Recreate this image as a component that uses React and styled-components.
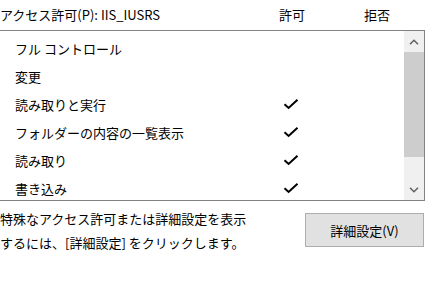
import React from "react";
import styled, { createGlobalStyle } from "styled-components";

const Global = createGlobalStyle`
  html, body { margin: 0; padding: 0; background: #ffffff; }
  body {
    font-family: "Noto Sans CJK JP", "Noto Sans", sans-serif;
    font-size: 13px;
    color: #000000;
  }
`;

const Page = styled.div`
  width: 430px;
  height: 302px;
  overflow: hidden;
  background: #ffffff;
`;

const Header = styled.div`
  display: grid;
  grid-template-columns: 1fr 56px 56px;
  column-gap: 29px;
  padding-right: 25px;
  height: 30px;
  align-items: center;
  white-space: nowrap;
`;

const HeadLabel = styled.span`
  padding-left: 0;
  margin-top: -1px;
`;

const HeadCol = styled.span`
  text-align: center;
  margin-top: -1px;
`;

const ListBox = styled.div`
  display: flex;
  width: 424px;
  height: 169px;
  border: 1px solid #828282;
  border-left: none;
  box-sizing: content-box;
`;

const Rows = styled.div`
  flex: 1;
  padding-top: 3px;
  overflow: hidden;
`;

const Row = styled.div`
  display: grid;
  grid-template-columns: 1fr 56px 56px;
  column-gap: 29px;
  height: 28px;
  align-items: center;
  white-space: nowrap;
`;

const Name = styled.span`
  padding-left: 15px;
`;

const Cell = styled.span`
  display: flex;
  justify-content: center;
  align-items: center;
`;

const Scrollbar = styled.div`
  width: 20px;
  display: flex;
  flex-direction: column;
  background: #f0f0f0;
`;

const Arrow = styled.div`
  height: 21px;
  display: flex;
  align-items: center;
  justify-content: center;
  background: #f0f0f0;
`;

const Track = styled.div`
  flex: 1;
  display: flex;
  flex-direction: column;
`;

const Thumb = styled.div`
  height: 105px;
  background: #cdcdcd;
`;

const Bottom = styled.div`
  display: flex;
  justify-content: space-between;
  align-items: flex-start;
  padding-top: 6px;
  width: 424px;
`;

const Note = styled.p`
  margin: 0;
  line-height: 24px;
  white-space: nowrap;
`;

const Button = styled.button`
  margin-top: 6px;
  width: 119px;
  height: 34px;
  background: #e1e1e1;
  border: 1px solid #adadad;
  font-family: inherit;
  font-size: 13px;
  color: #000;
  padding: 0;
`;

const Check = () => (
  <svg width="16" height="12" viewBox="0 0 16 12">
    <path d="M1.5 6.2 L5.6 10 L14.5 1.8" fill="none" stroke="#000" strokeWidth="2" />
  </svg>
);

const Chevron = ({ up }) => (
  <svg width="10" height="6" viewBox="0 0 10 6">
    <path
      d={up ? "M1 5.2 L5 1.2 L9 5.2" : "M1 0.8 L5 4.8 L9 0.8"}
      fill="none"
      stroke="#606060"
      strokeWidth="1.5"
    />
  </svg>
);

const items = [
  { name: "フル コントロール", allow: false },
  { name: "変更", allow: false },
  { name: "読み取りと実行", allow: true },
  { name: "フォルダーの内容の一覧表示", allow: true },
  { name: "読み取り", allow: true },
  { name: "書き込み", allow: true },
];

export default function App() {
  return (
    <Page>
      <Global />
      <Header>
        <HeadLabel>アクセス許可(P): IIS_IUSRS</HeadLabel>
        <HeadCol>許可</HeadCol>
        <HeadCol>拒否</HeadCol>
      </Header>
      <ListBox>
        <Rows>
          {items.map((it) => (
            <Row key={it.name}>
              <Name>{it.name}</Name>
              <Cell>{it.allow && <Check />}</Cell>
              <Cell />
            </Row>
          ))}
        </Rows>
        <Scrollbar>
          <Arrow><Chevron up /></Arrow>
          <Track>
            <Thumb />
          </Track>
          <Arrow><Chevron /></Arrow>
        </Scrollbar>
      </ListBox>
      <Bottom>
        <Note>
          特殊なアクセス許可または詳細設定を表示
          <br />
          するには、[詳細設定] をクリックします。
        </Note>
        <Button>詳細設定(V)</Button>
      </Bottom>
    </Page>
  );
}
